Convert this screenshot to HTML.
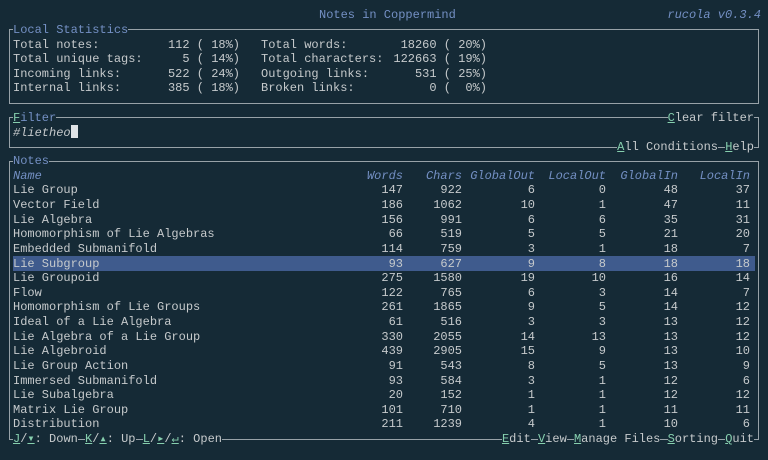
<!DOCTYPE html>
<html><head><meta charset="utf-8"><style>
html,body{margin:0;padding:0;}
body{width:768px;height:460px;background:#152a36;overflow:hidden;position:relative;font-family:"Liberation Mono","DejaVu Sans Mono",monospace;font-size:12px;color:#c6cacc;}
.t{position:absolute;white-space:pre;line-height:14.62px;height:14.62px;}
.r{text-align:right;}
.b{color:#7490c4;}
.i{font-style:italic;}
.g{color:#86cfae;text-decoration:underline;}
.bg{background:#152a36;}
.sp{display:inline-block;width:7.2px;}
.box{position:absolute;border:1px solid #98a2a8;}
.hl{position:absolute;left:13px;width:742px;height:14.62px;top:256.2px;background:#3f5b8d;}
</style></head><body>
<div class="t b" style="left:319px;top:8px">Notes in Coppermind</div>
<div class="t b i" style="right:7px;top:8px">rucola v0.3.4</div>

<div class="box" style="left:9px;top:29px;width:748px;height:73px;"></div>
<div class="t b bg" style="left:13px;top:22.6px">Local Statistics</div>
<div class="t" style="left:13px;top:37.5px;height:auto">Total notes:<br>Total unique tags:<br>Incoming links:<br>Internal links:</div>
<div class="t r" style="right:528px;top:37.5px;height:auto">112 ( 18%)<br>5 ( 14%)<br>522 ( 24%)<br>385 ( 18%)</div>
<div class="t" style="left:261px;top:37.5px;height:auto">Total words:<br>Total characters:<br>Outgoing links:<br>Broken links:</div>
<div class="t r" style="right:281px;top:37.5px;height:auto">18260 ( 20%)<br>122663 ( 19%)<br>531 ( 25%)<br>0 (  0%)</div>

<div class="box" style="left:9px;top:117px;width:748px;height:29px;"></div>
<div class="t bg" style="left:13px;top:110.5px"><span class="g">F</span><span class="b">ilter</span></div>
<div class="t bg" style="right:14px;top:110.5px"><span class="g">C</span>lear filter</div>
<div class="t i" style="left:13px;top:125px">#lietheo<span style="display:inline-block;width:7px;height:13px;background:#dfe3e6;vertical-align:-2px"></span></div>
<div class="t" style="right:14px;top:139.6px"><span class="bg"><span class="g">A</span>ll Conditions</span><span class="sp"></span><span class="bg"><span class="g">H</span>elp</span></div>

<div class="box" style="left:9px;top:161px;width:748px;height:277px;"></div>
<div class="t b bg" style="left:13px;top:154.2px">Notes</div>
<div class="hl"></div>

<div class="t b i" style="left:13px;top:168.8px">Name</div>
<div class="t b i r" style="right:365px;top:168.8px">Words</div>
<div class="t b i r" style="right:306px;top:168.8px">Chars</div>
<div class="t b i r" style="right:233px;top:168.8px">GlobalOut</div>
<div class="t b i r" style="right:162px;top:168.8px">LocalOut</div>
<div class="t b i r" style="right:90px;top:168.8px">GlobalIn</div>
<div class="t b i r" style="right:18px;top:168.8px">LocalIn</div>

<div class="t" style="left:13px;top:183.4px;height:auto">Lie Group<br>Vector Field<br>Lie Algebra<br>Homomorphism of Lie Algebras<br>Embedded Submanifold<br>Lie Subgroup<br>Lie Groupoid<br>Flow<br>Homomorphism of Lie Groups<br>Ideal of a Lie Algebra<br>Lie Algebra of a Lie Group<br>Lie Algebroid<br>Lie Group Action<br>Immersed Submanifold<br>Lie Subalgebra<br>Matrix Lie Group<br>Distribution</div>
<div class="t r" style="right:365px;top:183.4px;height:auto">147<br>186<br>156<br>66<br>114<br>93<br>275<br>122<br>261<br>61<br>330<br>439<br>91<br>93<br>20<br>101<br>211</div>
<div class="t r" style="right:306px;top:183.4px;height:auto">922<br>1062<br>991<br>519<br>759<br>627<br>1580<br>765<br>1865<br>516<br>2055<br>2905<br>543<br>584<br>152<br>710<br>1239</div>
<div class="t r" style="right:233px;top:183.4px;height:auto">6<br>10<br>6<br>5<br>3<br>9<br>19<br>6<br>9<br>3<br>14<br>15<br>8<br>3<br>1<br>1<br>4</div>
<div class="t r" style="right:162px;top:183.4px;height:auto">0<br>1<br>6<br>5<br>1<br>8<br>10<br>3<br>5<br>3<br>13<br>9<br>5<br>1<br>1<br>1<br>1</div>
<div class="t r" style="right:90px;top:183.4px;height:auto">48<br>47<br>35<br>21<br>18<br>18<br>16<br>14<br>14<br>13<br>13<br>13<br>13<br>12<br>12<br>11<br>10</div>
<div class="t r" style="right:18px;top:183.4px;height:auto">37<br>11<br>31<br>20<br>7<br>18<br>14<br>7<br>12<br>12<br>12<br>10<br>9<br>6<br>12<br>11<br>6</div>

<div class="t" style="left:13px;top:432px"><span class="bg"><span class="g">J</span>/<span class="g">▾</span>: Down</span><span class="sp"></span><span class="bg"><span class="g">K</span>/<span class="g">▴</span>: Up</span><span class="sp"></span><span class="bg"><span class="g">L</span>/<span class="g">▸</span>/<span class="g">↵</span>: Open</span></div>
<div class="t" style="right:14px;top:432px"><span class="bg"><span class="g">E</span>dit</span><span class="sp"></span><span class="bg"><span class="g">V</span>iew</span><span class="sp"></span><span class="bg"><span class="g">M</span>anage Files</span><span class="sp"></span><span class="bg"><span class="g">S</span>orting</span><span class="sp"></span><span class="bg"><span class="g">Q</span>uit</span></div>
</body></html>
